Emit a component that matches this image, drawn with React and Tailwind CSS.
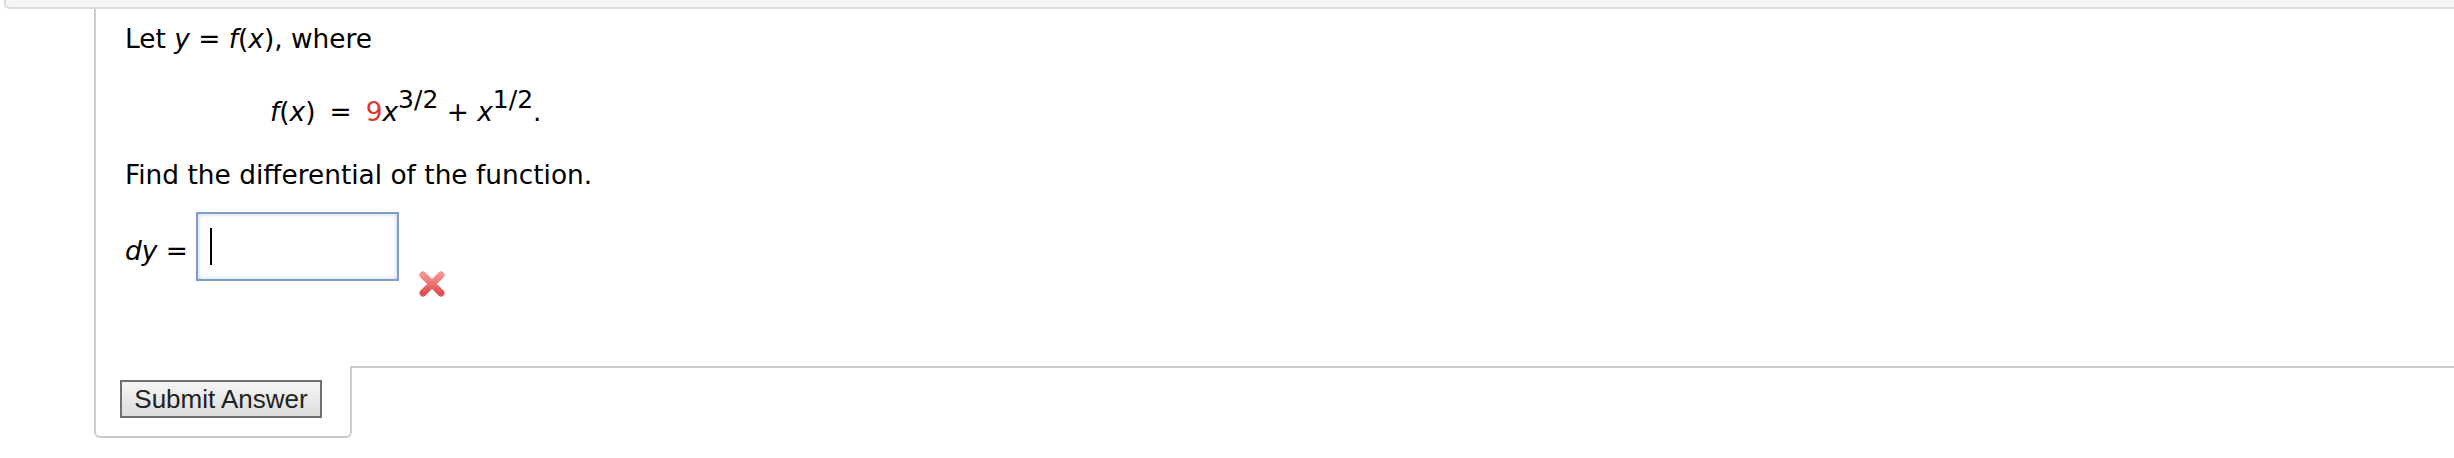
export default function App() {
  return (
    <div className="min-h-[458px] bg-white font-['DejaVu_Sans',Verdana,sans-serif] text-black">
      {/* bottom of the previous problem block */}
      <div className="ml-[4px] h-[9px] rounded-bl-[5px] border-b-2 border-l-2 border-[#dcdcdc] bg-[#f5f5f5]" />

      <div className="ml-[94px]">
        <div className="h-[357px] border-l-2 border-[#cccccc] pl-[29px] pt-[15px] text-[26.4px] leading-[30px]">
          <p className="h-[30px]">
            Let <i>y</i> = <i>f</i>(<i>x</i>), where
          </p>

          <p className="mt-[43px] h-[30px] pl-[145px]">
            <i>f</i>(<i>x</i>)<span className="mx-[14px]">=</span>
            <span className="text-[#e3362a]">9</span>
            <i>x</i>
            <sup className="-top-[13px] text-[25px]">3/2</sup> + <i>x</i>
            <sup className="-top-[13px] text-[25px]">1/2</sup>.
          </p>

          <p className="mt-[33px] h-[30px]">Find the differential of the function.</p>

          <div className="mt-[22px] flex items-start">
            <span className="mt-[24px] h-[30px] whitespace-pre">
              <i>dy</i> =
            </span>
            <div className="ml-[8px] h-[69px] w-[203px] border-2 border-[#7e9cc4] bg-white pl-[12px] pt-[14px] shadow-[inset_0_0_5px_rgba(110,150,210,0.45)]">
              <div className="h-[37px] w-[2px] bg-black" />
            </div>
            <svg className="ml-[19px] mt-[58px]" width="28" height="28" viewBox="0 0 28 28">
              <defs>
                <linearGradient id="xg" x1="0" y1="0" x2="0" y2="1">
                  <stop offset="0" stopColor="#f39491" />
                  <stop offset="1" stopColor="#e0524f" />
                </linearGradient>
              </defs>
              <path
                d="M5 5 L23 23 M23 5 L5 23"
                stroke="url(#xg)"
                strokeWidth="7"
                strokeLinecap="round"
                fill="none"
              />
            </svg>
          </div>
        </div>

        <div className="flex">
          <div className="h-[72px] w-[258px] rounded-b-[6px] border-x-2 border-b-2 border-[#cccccc] pl-[24px] pt-[14px]">
            <button
              type="button"
              className="flex h-[38px] w-[202px] items-center justify-center border-2 border-[#6f6f6f] bg-gradient-to-b from-[#f5f5f5] to-[#dddddd] font-['Liberation_Sans',Arial,sans-serif] text-[26px] text-[#222]"
            >
              Submit Answer
            </button>
          </div>
          <div className="flex-1 border-t-2 border-[#cccccc]" />
        </div>
      </div>
    </div>
  )
}
